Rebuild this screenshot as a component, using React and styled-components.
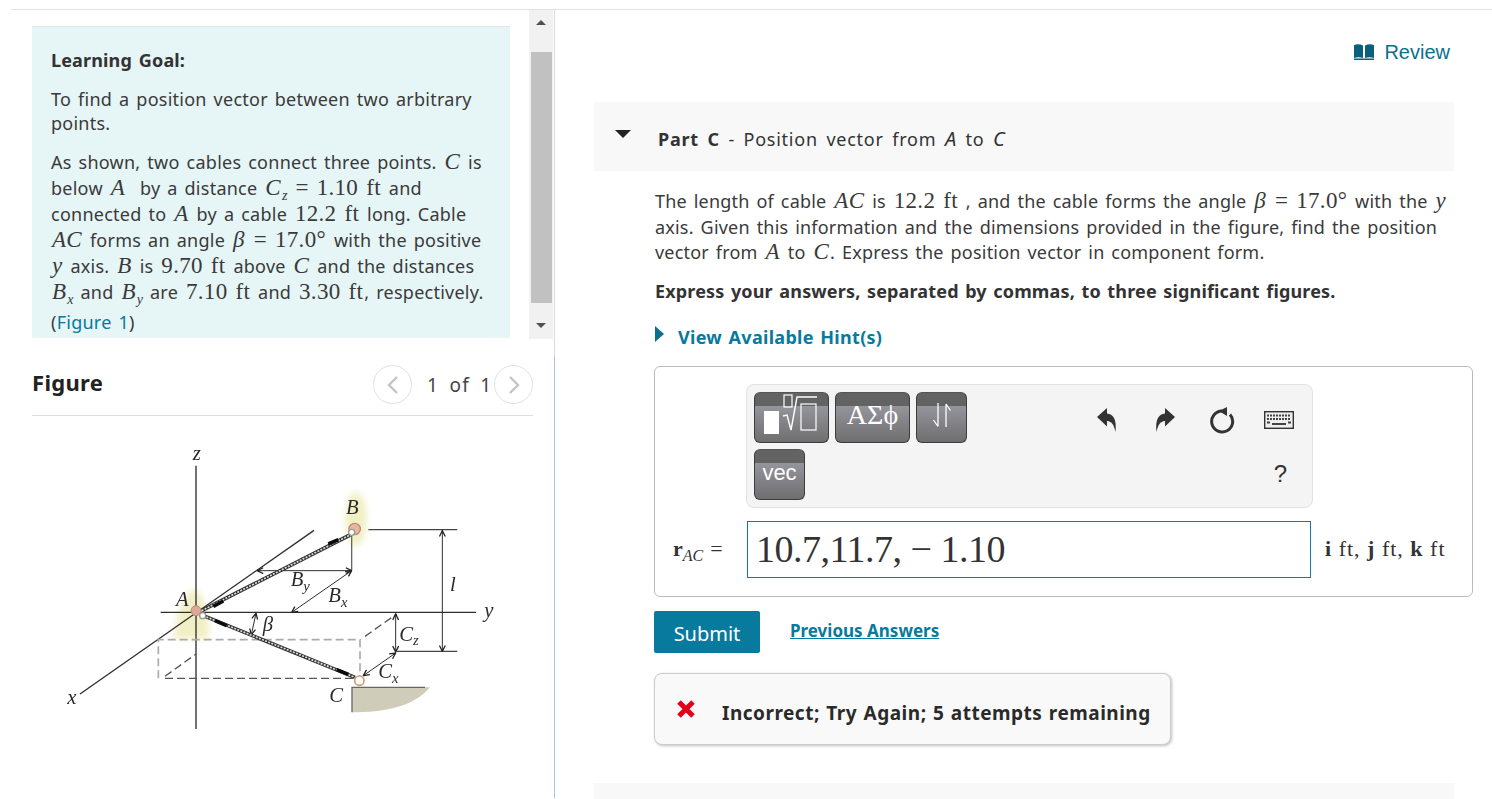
import React from "react";
import styled, { createGlobalStyle } from "styled-components";

const serif = `"Liberation Serif", "DejaVu Serif", serif`;
const sans = `"Noto Sans", "Open Sans", sans-serif`;

const Global = createGlobalStyle`
  html, body { margin: 0; padding: 0; height: 100%; overflow: hidden; background: #fff; }
  body { font-family: ${sans}; color: #333; }
  #root { height: 100%; }
`;

const Page = styled.div`
  height: 799px;
  padding-top: 9px;
  box-sizing: border-box;
  overflow: hidden;
`;
const Frame = styled.div`
  display: flex;
  height: 788px;
  margin-left: 11px;
  border-top: 1px solid #e2e2e2;
`;
const Left = styled.div`
  width: 544px;
  flex: none;
  margin-left: -11px;
  padding-left: 11px;
`;
const TopPane = styled.div`
  display: flex;
  height: 347px;
  border-right: 1px solid #dcdcdc;
  width: 544px;
  box-sizing: border-box;
`;
const GoalBox = styled.div`
  width: 478px;
  height: 312px;
  margin: 16px 19px 0 21px;
  flex: none;
  box-sizing: border-box;
  padding: 20px 0 0 19px;
  background: #e6f5f6;
  border-top: 1px solid #dfe5e5;
  overflow: hidden;
  font-size: 18px;
  line-height: 26px;
  letter-spacing: 0.25px;
  word-spacing: 2px;
  color: #3a3a3a;
  white-space: nowrap;
`;
const GoalTitle = styled.div`
  font-weight: 700;
  font-size: 18px;
  line-height: 26px;
  letter-spacing: 0.15px;
  color: #333;
  margin-bottom: 14px;
`;
const GoalPara = styled.p`
  margin: 0 0 14px;
  line-height: ${(p) => p.$lh || 26}px;
`;
const FigureRef = styled.span`
  display: block;
  margin-top: 4px;
`;
const Scrollbar = styled.div`
  width: 24px;
  height: 329px;
  flex: none;
  background: #f1f1f1;
  display: flex;
  flex-direction: column;
  align-items: center;
`;
const ScrollEnd = styled.div`
  height: ${(p) => p.$h}px;
  width: 100%;
  display: flex;
  justify-content: center;
  padding-top: ${(p) => p.$top}px;
  box-sizing: border-box;
`;
const Tri = styled.div`
  width: 0;
  height: 0;
  border-left: 5px solid transparent;
  border-right: 5px solid transparent;
  ${(p) => (p.$up ? "border-bottom: 5px solid #505050;" : "border-top: 5px solid #505050;")}
`;
const Thumb = styled.div`
  width: 21px;
  height: 251px;
  flex: none;
  background: #c1c1c1;
`;
const FigurePane = styled.div`
  width: 544px;
  height: 441px;
  box-sizing: border-box;
  border-right: 1px solid #a9c3dc;
  padding: 0 21px 0 21px;
`;
const FigureHead = styled.div`
  display: flex;
  align-items: center;
  justify-content: space-between;
  height: 59px;
  border-bottom: 1px solid #ddd;
  box-sizing: border-box;
`;
const FigureTitle = styled.div`
  font-weight: 700;
  font-size: 22px;
  letter-spacing: 0.3px;
  color: #222;
  margin-top: -9px;
`;
const Pager = styled.div`
  display: flex;
  align-items: center;
  font-size: 19px;
  letter-spacing: 1.3px;
  word-spacing: 4px;
  color: #444;
  margin-top: -3px;
`;
const PageBtn = styled.div`
  width: 39px;
  height: 39px;
  box-sizing: border-box;
  border: 1px solid #e2e2e2;
  border-radius: 50%;
  display: flex;
  align-items: center;
  justify-content: center;
`;
const PageText = styled.span`
  margin: 0 1px 0 15px;
  width: 66px;
  white-space: nowrap;
`;
const FigureSvg = styled.svg`
  display: block;
  width: 460px;
  height: 300px;
  margin: 13px 0 0 18px;
`;

const Right = styled.div`
  flex: 1;
  min-width: 0;
  padding: 0 38px 0 39px;
`;
const ReviewRow = styled.div`
  height: 92px;
  display: flex;
  align-items: center;
  justify-content: flex-end;
  gap: 10px;
  padding: 0 4px 8px 0;
  box-sizing: border-box;
  font-family: "Liberation Sans", sans-serif;
  font-size: 20px;
  color: #0b6f8e;
`;
const PartHead = styled.div`
  height: 69px;
  background: #f8f8f8;
  display: flex;
  align-items: center;
  font-size: 18px;
  letter-spacing: 0.75px;
  word-spacing: 3.2px;
  color: #333;
`;
const PartTitle = styled.span`
  margin-top: 3px;
  white-space: nowrap;
  i {
    font-size: 20px;
  }
`;
const PartTri = styled.div`
  width: 0;
  height: 0;
  margin: -6px 27px 0 21px;
  border-left: 8px solid transparent;
  border-right: 8px solid transparent;
  border-top: 8px solid #222;
`;
const PartBody = styled.div`
  padding: 18px 0 0 61px;
  font-size: 18px;
  color: #3a3a3a;
`;
const BodyPara = styled.p`
  margin: 0;
  line-height: 25.5px;
  letter-spacing: 0.2px;
  word-spacing: 2px;
  white-space: nowrap;
`;
const Strong = styled.p`
  margin: 12px 0 0;
  font-weight: 700;
  font-size: 18px;
  line-height: 26px;
  letter-spacing: 0.15px;
  word-spacing: 1.7px;
  color: #333;
  white-space: nowrap;
`;
const Hint = styled.div`
  display: flex;
  align-items: center;
  margin-top: 20px;
  height: 26px;
  font-weight: 700;
  color: #077a9d;
  font-size: 18px;
  letter-spacing: 0.3px;
  word-spacing: 1.5px;
`;
const HintTri = styled.div`
  width: 0;
  height: 0;
  margin: -6px 14px 0 0;
  border-top: 8px solid transparent;
  border-bottom: 8px solid transparent;
  border-left: 9px solid #0b6f8e;
`;
const AnswerBox = styled.div`
  width: 819px;
  height: 231px;
  margin: 16px 0 0 -1px;
  box-sizing: border-box;
  border: 1px solid #bbb;
  border-radius: 6px;
  padding: 17px 0 0 91px;
`;
const Toolbar = styled.div`
  width: 567px;
  height: 124px;
  box-sizing: border-box;
  background: #f4f4f4;
  border: 1px solid #e2e2e2;
  border-radius: 8px;
  padding: 7px 7px;
  display: flex;
  justify-content: space-between;
`;
const TemplateGrid = styled.div`
  display: flex;
  flex-wrap: wrap;
  align-content: flex-start;
  gap: 6px;
  width: 225px;
`;
const MathBtn = styled.div`
  width: ${(p) => p.$w}px;
  height: 51px;
  box-sizing: border-box;
  border-radius: 6px;
  border: 1px solid #3c3c3c;
  border-top-color: #555;
  background: linear-gradient(#636363 0, #636363 13px, #94949c 13px, #6f6f6f 100%);
  color: #fff;
  display: flex;
  align-items: center;
  justify-content: center;
  padding-bottom: ${(p) => (p.$sans ? 3 : 5)}px;
  font-family: ${(p) => (p.$sans ? `"Liberation Sans", sans-serif` : serif)};
  font-size: ${(p) => (p.$sans ? 22 : 28)}px;
`;
const ToolCol = styled.div`
  display: flex;
  flex-direction: column;
  align-items: flex-end;
  justify-content: space-between;
  padding: 14px 11px 12px 0;
  flex: 1;
`;
const ToolIcons = styled.div`
  display: flex;
  align-items: center;
`;
const ToolIcon = styled.span`
  display: flex;
  margin-right: ${(p) => p.$gap || 0}px;
`;
const Help = styled.div`
  font-family: "Liberation Sans", sans-serif;
  font-size: 24px;
  color: #333;
  margin-right: 7px;
`;
const AnswerRow = styled.div`
  display: flex;
  align-items: center;
  margin: 13px 0 0 -73px;
`;
const AnswerLabel = styled.div`
  width: 74px;
  flex: none;
  font-family: ${serif};
  font-size: 22px;
  color: #333;
  white-space: nowrap;
  span {
    margin-left: 7px;
  }
`;
const LabelSub = styled.sub`
  font-style: italic;
  font-size: 16px;
  line-height: 0;
`;
const AnswerInput = styled.div`
  width: 564px;
  height: 57px;
  box-sizing: border-box;
  flex: none;
  border: 1px solid #147a9b;
  padding-left: 8px;
  display: flex;
  align-items: center;
  font-family: ${serif};
  font-size: 38px;
  letter-spacing: -0.5px;
  color: #333;
`;
const Units = styled.div`
  margin-left: 14px;
  font-family: ${serif};
  font-size: 22px;
  letter-spacing: 1px;
  color: #333;
  white-space: nowrap;
`;
const ActionRow = styled.div`
  display: flex;
  align-items: flex-start;
  margin: 14px 0 0 -1px;
  gap: 30px;
`;
const Submit = styled.div`
  width: 106px;
  height: 42px;
  padding-top: 3px;
  box-sizing: border-box;
  background: #077a9d;
  color: #fff;
  border-radius: 2px;
  font-size: 20px;
  display: flex;
  align-items: center;
  justify-content: center;
`;
const PrevLink = styled.a`
  font-size: 17px;
  font-weight: 700;
  color: #077a9d;
  text-decoration: underline;
  line-height: 40px;
`;
const Feedback = styled.div`
  width: 517px;
  height: 72px;
  margin: 20px 0 0 -1px;
  box-sizing: border-box;
  background: #f9f9f9;
  border: 1px solid #ccc;
  border-radius: 8px;
  box-shadow: 1px 1px 3px rgba(0, 0, 0, 0.25);
  display: flex;
  align-items: center;
  padding-left: 21px;
  gap: 26px;
  font-weight: 700;
  font-size: 19px;
  letter-spacing: 0.5px;
  word-spacing: 1px;
  color: #2a2a2a;
`;
const FeedbackText = styled.span`
  margin-top: 8px;
  white-space: nowrap;
`;
const NextPart = styled.div`
  height: 40px;
  background: #f8f8f8;
  margin: 38px 0 0 -61px;
`;
const M = styled.span`
  font-family: ${serif};
  font-style: ${(p) => (p.$up ? "normal" : "italic")};
  font-size: 23px;
  line-height: 0;
  letter-spacing: 0.3px;
  word-spacing: 2px;
  padding: 0 1px;
`;
const Sub = styled.sub`
  font-family: ${serif};
  font-style: italic;
  font-size: 14px;
  line-height: 0;
  letter-spacing: 0;
`;
const Link = styled.span`
  color: #077a9d;
`;
const B = styled.b`
  font-family: ${serif};
`;

const Undo = ({ flip }) => (
  <svg width="22" height="26" viewBox="0 0 22 26" style={flip ? { transform: "scaleX(-1)" } : undefined}>
    <path d="M1 10 L11 1 V6.5 C17 7 21 12 19.5 25 C18 18 16 14.5 11 14 V19.5 Z" fill="#333" />
  </svg>
);
const Redo = () => (
  <svg width="26" height="28" viewBox="0 0 26 28">
    <path d="M13 5 A10.5 10.5 0 1 0 21 8.5" fill="none" stroke="#333" strokeWidth="3" />
    <path d="M18 1 V10 L10 5 Z" fill="#333" />
  </svg>
);
const Keyboard = () => (
  <svg width="30" height="18" viewBox="0 0 30 18">
    <rect x="0.7" y="0.7" width="28.6" height="16.6" fill="#eee" stroke="#333" strokeWidth="1.4" />
    <path d="M3 4.5 H27 M3 8 H27" stroke="#444" strokeWidth="2" strokeDasharray="2 1" />
    <path d="M3 11.5 H6 M8 13 H22 M24 11.5 H27" stroke="#444" strokeWidth="2" />
  </svg>
);
const BookIcon = () => (
  <svg width="20" height="16" viewBox="0 0 20 16">
    <path d="M0 1 C3 0 6 0 9 1.5 V14 C6 13 3 13 0 14 Z M11 1.5 C14 0 17 0 20 1 V14 C17 13 14 13 11 14 Z" fill="#0b5f7c" />
    <path d="M0 14.5 H20 V16 H0 Z" fill="#0b5f7c" />
  </svg>
);
const Chevron = ({ right }) => (
  <svg width="14" height="20" viewBox="0 0 14 20">
    <path d={right ? "M3 2 L11 10 L3 18" : "M11 2 L3 10 L11 18"} fill="none" stroke="#c4c4c4" strokeWidth="2.4" />
  </svg>
);
const RootIcon = () => (
  <svg width="66" height="42" viewBox="0 0 66 42">
    <rect x="5" y="17" width="15" height="23" fill="#fff" />
    <rect x="25" y="1" width="8" height="12" fill="none" stroke="#fff" strokeWidth="1.2" />
    <path d="M24 22 L28 21 L32 36 L38 3 H58" fill="none" stroke="#fff" strokeWidth="1.4" />
    <rect x="42" y="10" width="15" height="26" fill="none" stroke="#fff" strokeWidth="1.2" />
  </svg>
);
const SwapIcon = () => (
  <svg width="20" height="28" viewBox="0 0 20 28">
    <path d="M6 2 V25 M1.5 19 L6 25.5 M14 26 V3 M14 3 L18.5 9.5" fill="none" stroke="#fff" strokeWidth="1.3" />
  </svg>
);
const CrossIcon = () => (
  <svg width="20" height="20" viewBox="0 0 20 20">
    <path d="M3 3 L17 17 M17 3 L3 17" stroke="#e2001a" strokeWidth="5" />
  </svg>
);

const Label = styled.text`
  font-family: ${serif};
  font-style: italic;
  font-size: 62px;
  fill: #2c2c2c;
`;

// drawn in 3x coordinates, soft filter mimics the scaled-up textbook image
const Figure = () => (
  <FigureSvg viewBox="0 0 1380 900">
    <defs>
      <filter id="soft"><feGaussianBlur stdDeviation="2" /></filter>
      <filter id="glow"><feGaussianBlur stdDeviation="9" /></filter>
      <marker id="head" viewBox="0 0 20 20" refX="18" refY="10" markerWidth="22" markerHeight="22" markerUnits="userSpaceOnUse" orient="auto-start-reverse">
        <path d="M2 2 L18 10 L2 18" fill="none" stroke="#222" strokeWidth="3.5" />
      </marker>
    </defs>
    <g filter="url(#glow)" fill="#f1efc4">
      <ellipse cx="918" cy="270" rx="32" ry="80" />
      <path d="M370 630 C375 560 410 480 435 480 C465 500 480 570 475 630 Z" />
    </g>
    <g filter="url(#soft)" fill="none" stroke="#2e2e2e" strokeWidth="4">
      <path d="M438 110 V900" />
      <path d="M332 550 H1278" />
      <path d="M90 795 L792 304" />
      <g stroke="#aaa" strokeDasharray="24 12" strokeWidth="5">
        <path d="M325 748 V632 H930 V740" />
      </g>
      <g strokeDasharray="24 12" stroke="#555">
        <path d="M345 748 H915" />
        <path d="M345 742 L438 675" />
        <path d="M945 622 L1040 555" />
      </g>
      <path d="M955 302 H1222 M1040 667 H1222" stroke="#444" />
      <path d="M905 320 V425" stroke="#666" />
      <g markerEnd="url(#head)" markerStart="url(#head)" strokeWidth="3">
        <path d="M1177 305 V667" />
        <path d="M622 425 H905" />
        <path d="M905 425 L725 550" />
        <path d="M618 553 L604 617" />
        <path d="M1037 555 V669" />
        <path d="M1037 672 L940 740" />
      </g>
      <g>
        <path d="M455 545 L900 318" stroke="#333" strokeWidth="11" />
        <path d="M455 545 L900 318" stroke="#ddd" strokeWidth="5" strokeDasharray="6 4" />
        <path d="M490 532 L520 516 M835 345 L865 332" stroke="#111" strokeWidth="11" />
        <path d="M460 560 L915 745" stroke="#333" strokeWidth="11" />
        <path d="M460 560 L915 745" stroke="#ddd" strokeWidth="5" strokeDasharray="6 4" />
        <path d="M495 575 L530 590 M860 722 L895 736" stroke="#111" strokeWidth="11" />
      </g>
      <circle cx="914" cy="300" r="17" fill="#e7b7a2" stroke="#b98a78" strokeWidth="4" />
      <circle cx="905" cy="310" r="9" fill="#fff" stroke="#999" />
      <circle cx="438" cy="545" r="15" fill="#dfa896" stroke="#b98a78" strokeWidth="3" />
      <circle cx="458" cy="560" r="9" fill="#fff" stroke="#999" />
      <circle cx="928" cy="755" r="14" fill="#fff" stroke="#c89f70" strokeWidth="5" />
      <path d="M906 775 H1140 C1090 835 1000 850 906 850 Z" fill="#cfcdb9" stroke="none" />
      <path d="M906 850 V775 H1125" stroke="#666" />
    </g>
    <g filter="url(#soft)">
      <Label x="428" y="92">z</Label>
      <Label x="52" y="825">x</Label>
      <Label x="1303" y="565">y</Label>
      <Label x="378" y="532">A</Label>
      <Label x="888" y="255">B</Label>
      <Label x="722" y="472">B<tspan fontSize="44" dy="14">y</tspan></Label>
      <Label x="835" y="520">B<tspan fontSize="44" dy="14">x</tspan></Label>
      <Label x="1200" y="485">l</Label>
      <Label x="638" y="607">β</Label>
      <Label x="1048" y="635">C<tspan fontSize="44" dy="14">z</tspan></Label>
      <Label x="985" y="748">C<tspan fontSize="44" dy="14">x</tspan></Label>
      <Label x="838" y="818">C</Label>
    </g>
  </FigureSvg>
);

export default function App() {
  return (
    <Page>
      <Global />
      <Frame>
        <Left>
          <TopPane>
            <GoalBox>
              <GoalTitle>Learning Goal:</GoalTitle>
              <GoalPara $lh={24}>To find a position vector between two arbitrary<br />points.</GoalPara>
              <GoalPara>
                As shown, two cables connect three points. <M>C</M> is<br />
                below <M>A</M>&nbsp; by a distance <M>C</M><Sub>z</Sub> <M $up>= 1.10 ft</M> and<br />
                connected to <M>A</M> by a cable <M $up>12.2 ft</M> long. Cable<br />
                <M>AC</M> forms an angle <M>β</M> <M $up>= 17.0°</M> with the positive<br />
                <M>y</M> axis. <M>B</M> is <M $up>9.70 ft</M> above <M>C</M> and the distances<br />
                <M>B</M><Sub>x</Sub> and <M>B</M><Sub>y</Sub> are <M $up>7.10 ft</M> and <M $up>3.30 ft</M>, respectively.
                <FigureRef>(<Link>Figure 1</Link>)</FigureRef>
              </GoalPara>
            </GoalBox>
            <Scrollbar>
              <ScrollEnd $h={42} $top={10}><Tri $up /></ScrollEnd>
              <Thumb />
              <ScrollEnd $h={36} $top={20}><Tri /></ScrollEnd>
            </Scrollbar>
          </TopPane>
          <FigurePane>
            <FigureHead>
              <FigureTitle>Figure</FigureTitle>
              <Pager>
                <PageBtn><Chevron /></PageBtn>
                <PageText>1 of 1</PageText>
                <PageBtn><Chevron right /></PageBtn>
              </Pager>
            </FigureHead>
            <Figure />
          </FigurePane>
        </Left>
        <Right>
          <ReviewRow><BookIcon />Review</ReviewRow>
          <PartHead>
            <PartTri />
            <PartTitle><b>Part C</b> - Position vector from <i>A</i> to <i>C</i></PartTitle>
          </PartHead>
          <PartBody>
            <BodyPara>
              The length of cable <M>AC</M> is <M $up>12.2 ft</M> , and the cable forms the angle <M>β</M> <M $up>= 17.0°</M> with the <M>y</M><br />
              axis. Given this information and the dimensions provided in the figure, find the position<br />
              vector from <M>A</M> to <M>C</M>. Express the position vector in component form.
            </BodyPara>
            <Strong>Express your answers, separated by commas, to three significant figures.</Strong>
            <Hint><HintTri />View Available Hint(s)</Hint>
            <AnswerBox>
              <Toolbar>
                <TemplateGrid>
                  <MathBtn $w={75}><RootIcon /></MathBtn>
                  <MathBtn $w={75}>ΑΣϕ</MathBtn>
                  <MathBtn $w={51}><SwapIcon /></MathBtn>
                  <MathBtn $w={51} $sans>vec</MathBtn>
                </TemplateGrid>
                <ToolCol>
                  <ToolIcons>
                    <ToolIcon $gap={36}><Undo /></ToolIcon>
                    <ToolIcon $gap={33}><Undo flip /></ToolIcon>
                    <ToolIcon $gap={29}><Redo /></ToolIcon>
                    <ToolIcon><Keyboard /></ToolIcon>
                  </ToolIcons>
                  <Help>?</Help>
                </ToolCol>
              </Toolbar>
              <AnswerRow>
                <AnswerLabel><b>r</b><LabelSub>AC</LabelSub><span>=</span></AnswerLabel>
                <AnswerInput>10.7,11.7, − 1.10</AnswerInput>
                <Units><B>i</B> ft, <B>j</B> ft, <B>k</B> ft</Units>
              </AnswerRow>
            </AnswerBox>
            <ActionRow>
              <Submit>Submit</Submit>
              <PrevLink>Previous Answers</PrevLink>
            </ActionRow>
            <Feedback><CrossIcon /><FeedbackText>Incorrect; Try Again; 5 attempts remaining</FeedbackText></Feedback>
            <NextPart />
          </PartBody>
        </Right>
      </Frame>
    </Page>
  );
}
